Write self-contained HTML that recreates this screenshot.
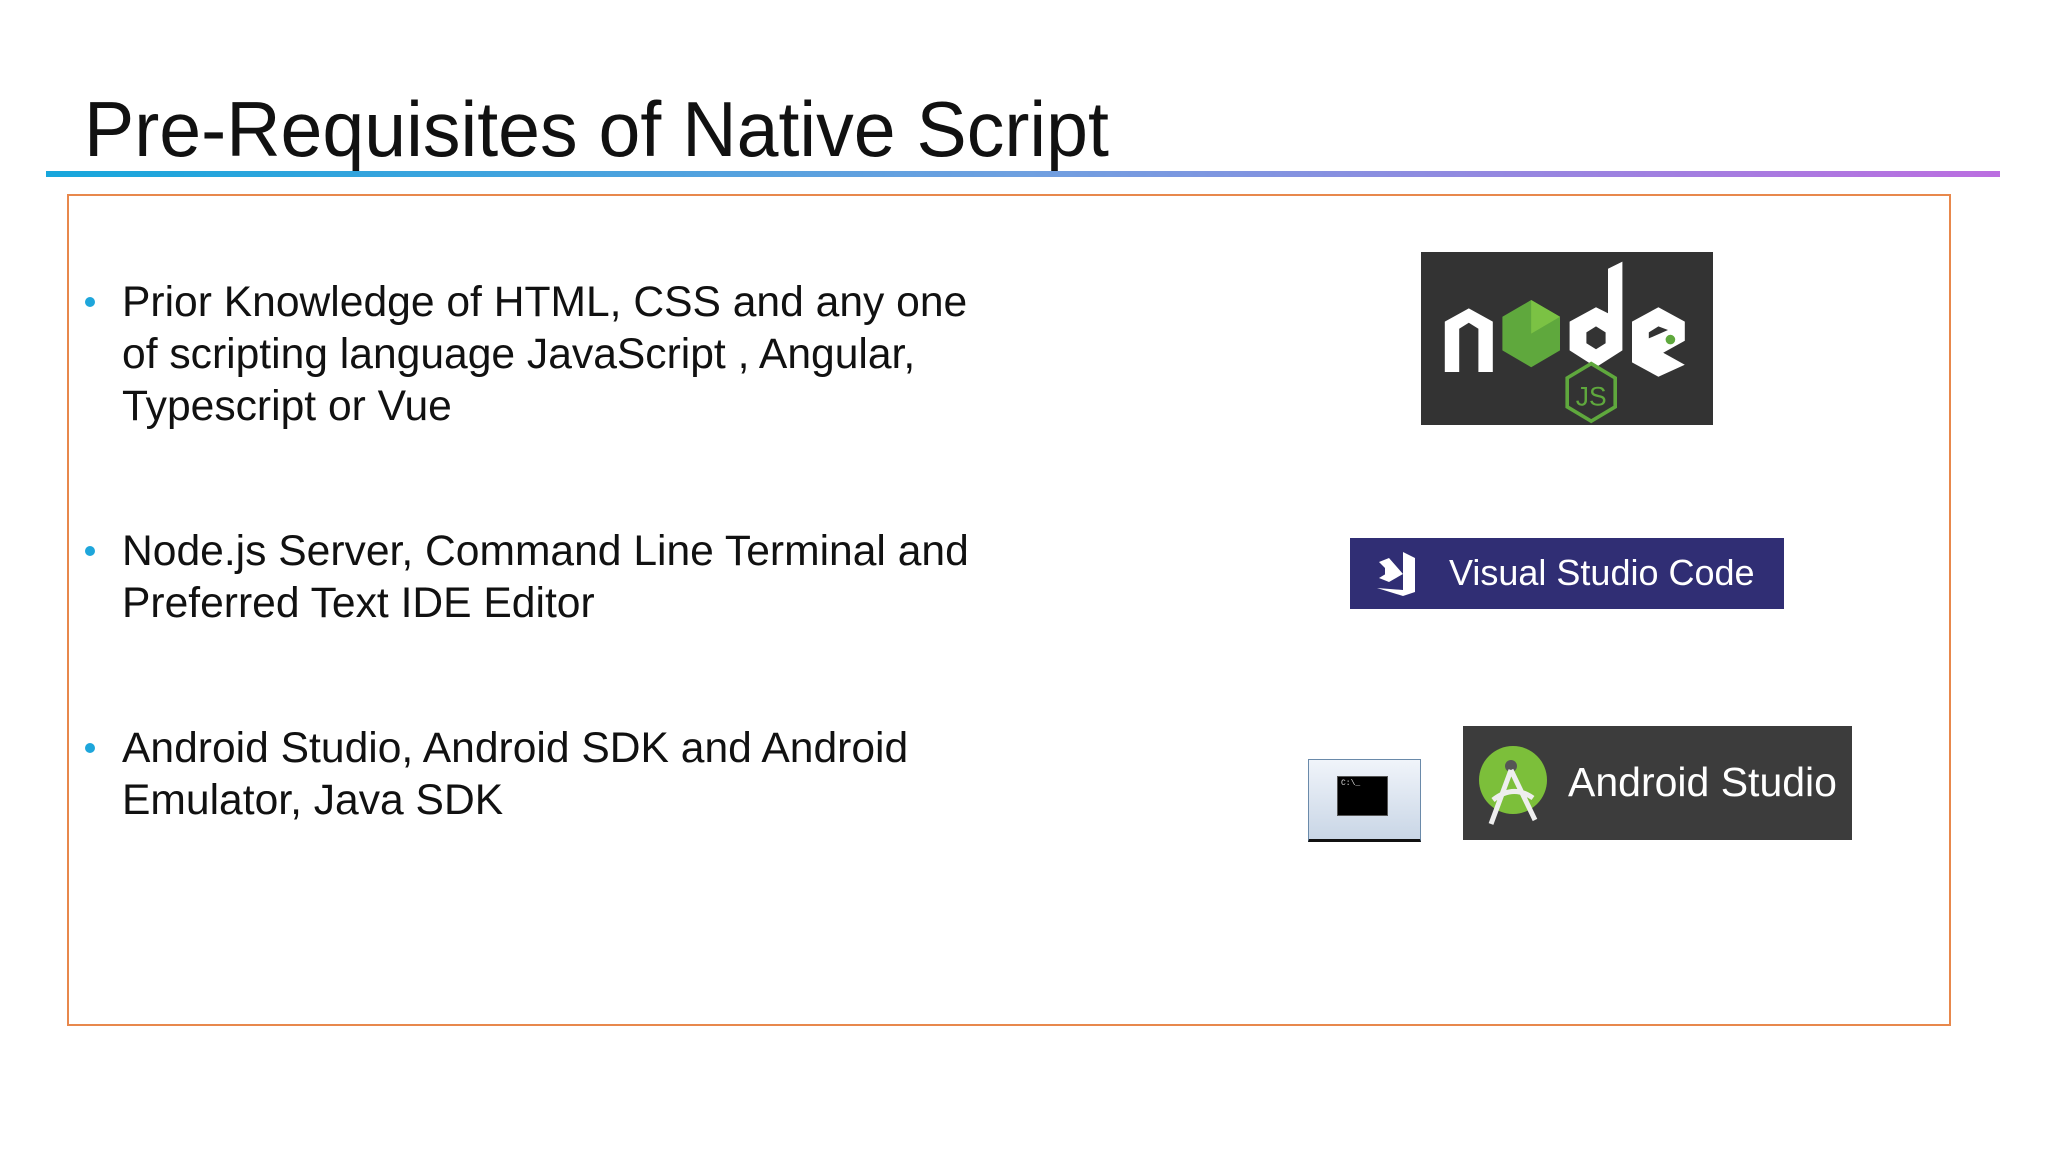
<!DOCTYPE html>
<html><head><meta charset="utf-8"><style>
body{margin:0;width:2048px;height:1152px;background:#fff;position:relative;overflow:hidden;font-family:"Liberation Sans",sans-serif}
.a{position:absolute}
.title{left:84px;top:81px;font-size:78px;line-height:96px;color:#111;white-space:nowrap;transform-origin:0 0;transform:scaleX(0.965)}
.bar{left:46px;top:171px;width:1954px;height:6px;background:linear-gradient(90deg,#17a6dc,#6fa0e0 50%,#bb6ee0)}
.box{left:67px;top:194px;width:1880px;height:828px;border:2px solid #e8884c}
.t{font-size:42.6px;line-height:52px;color:#111;white-space:nowrap;left:122px}
.dot{width:10px;height:10px;border-radius:50%;background:#1ea6db;left:85px}
.r{position:absolute;left:-7px;top:0px;width:2048px;height:1152px}
</style></head><body>
<div class="a title">Pre-Requisites of Native Script</div>
<div class="a bar"></div>
<div class="a box"></div>

<div class="a dot" style="top:297px"></div>
<div class="a t" style="top:276px">Prior Knowledge of HTML, CSS and any one<br>of scripting language JavaScript , Angular,<br>Typescript or Vue</div>
<div class="a dot" style="top:546px"></div>
<div class="a t" style="top:525px">Node.js Server, Command Line Terminal and<br>Preferred Text IDE Editor</div>
<div class="a dot" style="top:743px"></div>
<div class="a t" style="top:722px">Android Studio, Android SDK and Android<br>Emulator, Java SDK</div>

<div class="r">
<!-- node -->
<div class="a" style="left:1428px;top:252px;width:292px;height:173px;background:#333">
<svg width="292" height="173" viewBox="0 0 292 173"><g transform="translate(-5,0) scale(1.2)">
<path d="M24 100 V58 L44 47 L64 58 V100 H52 V64 L44 59 L36 64 V100Z" fill="#fff"/>
<path d="M96 40 L120 54 V82 L96 96 L72 82 V54Z" fill="#5fa83d"/>
<path d="M96 40 L120 54 L96 68Z" fill="#7bc244"/>
<path d="M160 14 L172 8 V82 L150 96 L128 82 V58 L150 46 L160 51Z M150 62 L142 67 V76 L150 81 L158 76 V67Z" fill="#fff"/>
<path d="M180 58 L202 46 L224 58 V74 L206 84 L224 94 L202 104 L180 92Z M202 62 L194 67 V72 L210 65Z" fill="#fff"/>
<circle cx="212" cy="73" r="4" fill="#5fa83d"/>
<path d="M146 93 L166 105 V129 L146 141 L126 129 V105Z" fill="none" stroke="#5fa83d" stroke-width="3"/>
<text x="146" y="128" font-size="22" fill="#5fa83d" text-anchor="middle" font-family="Liberation Sans">JS</text>
</g></svg></div>

<!-- vscode -->
<div class="a" style="left:1357px;top:538px;width:434px;height:71px;background:#302e74"></div>
<svg class="a" style="left:1380px;top:548px" width="50" height="50" viewBox="0 0 50 50">
<path d="M30 4 L42 10 V44 L30 48 L4 40 L30 42Z" fill="#fff"/>
<path d="M6 14 L16 10 L30 26 L16 34 L6 30 L16 24Z M12 18 L18 24 L12 28Z" fill="#fff"/>
</svg>
<div class="a" style="left:1456px;top:550px;font-size:36px;line-height:46px;color:#fff;white-space:nowrap">Visual Studio Code</div>

<!-- cmd -->
<div class="a" style="left:1315px;top:759px;width:111px;height:79px;background:linear-gradient(#f0f4fa,#c9d6e6);border:1px solid #6a8aaa;border-bottom:3px solid #111"></div>
<div class="a" style="left:1344px;top:776px;width:51px;height:40px;background:#000;border:1px solid #555;font:8px 'Liberation Mono',monospace;color:#ddd;box-sizing:border-box;padding:2px 3px">C:\_</div>

<!-- android -->
<div class="a" style="left:1470px;top:726px;width:389px;height:114px;background:#3c3c3c"></div>
<svg class="a" style="left:1484px;top:744px" width="72" height="84" viewBox="0 0 72 84">
<circle cx="36" cy="36" r="34" fill="#7cbf3a"/>
<circle cx="34" cy="22" r="6" fill="#555"/>
<path d="M34 26 L14 80 M34 26 L58 76 M16 56 Q36 40 56 54" stroke="#eee" stroke-width="5" fill="none"/>
</svg>
<div class="a" style="left:1575px;top:756px;font-size:41px;line-height:52px;color:#fff;white-space:nowrap">Android Studio</div>
</div>
</body></html>
